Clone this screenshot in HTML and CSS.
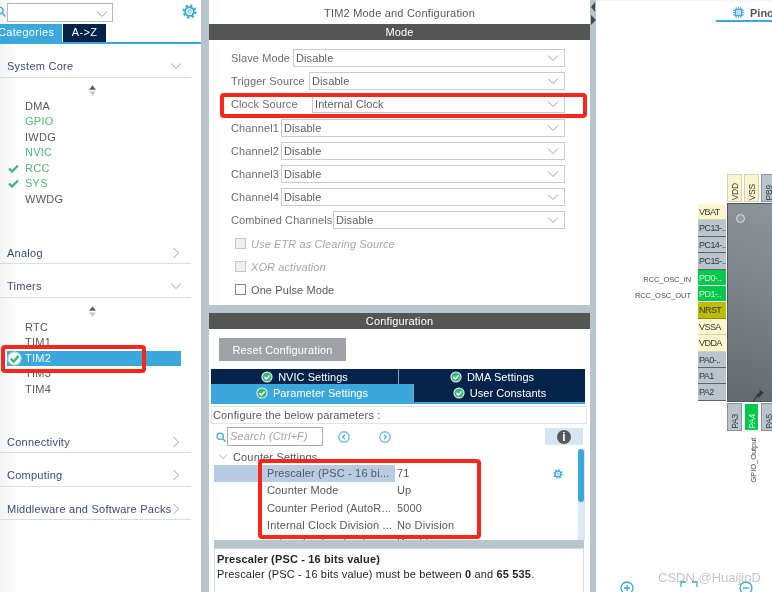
FILE: index.html
```html
<!DOCTYPE html>
<html lang="en">
<head>
<meta charset="utf-8">
<title>TIM2 Mode and Configuration</title>
<link rel="stylesheet" href="styles.css">
</head>
<body>
<svg class="sprite" aria-hidden="true">
  <symbol id="down" viewBox="0 0 12 8"><path d="M1 1.5 6 6.5 11 1.5" fill="none" stroke="#9a9fa4" stroke-width="1"/></symbol>
  <symbol id="right" viewBox="0 0 8 12"><path d="M1.5 1 6.5 6 1.5 11" fill="none" stroke="#9a9fa4" stroke-width="1"/></symbol>
  <symbol id="sort" viewBox="0 0 8 12"><path d="M4 0 8 5H0Z" fill="#5d6266"/><path d="M4 12 8 7H0Z" fill="#c4c8cc"/></symbol>
  <symbol id="tick" viewBox="0 0 14 12"><path d="M1 6 5 10 13 2" fill="none" stroke="#3cb371" stroke-width="3"/></symbol>
  <symbol id="okc" viewBox="0 0 12 12"><circle cx="6" cy="6" r="5.6" fill="#e8f5ee"/><circle cx="6" cy="6" r="4.6" fill="#3fb67c"/><path d="M3.4 6.1 5.3 8 8.7 4.4" fill="none" stroke="#fff" stroke-width="1.5"/></symbol>
  <symbol id="okw" viewBox="0 0 15 15"><circle cx="7.5" cy="7.5" r="7" fill="#f2f8f5"/><circle cx="7.5" cy="7.5" r="6.4" fill="none" stroke="#a8dcc0"/><path d="M3.8 7.8 6.6 10.6 11.4 5" fill="none" stroke="#3cb371" stroke-width="2.2"/></symbol>
  <symbol id="gear" viewBox="0 0 16 16"><circle cx="8" cy="8" r="4.6" fill="none" stroke="#3aa8dc" stroke-width="2"/><circle cx="8" cy="8" r="6.4" fill="none" stroke="#3aa8dc" stroke-width="2.2" stroke-dasharray="2.5 2.5"/><circle cx="8" cy="8" r="1.8" fill="none" stroke="#3aa8dc"/></symbol>
  <symbol id="lens" viewBox="0 0 12 12"><circle cx="5" cy="5" r="3.8" fill="none" stroke="#3aa8dc" stroke-width="1.5"/><path d="M8 8 11.5 11.5" stroke="#3aa8dc" stroke-width="1.6"/></symbol>
  <symbol id="prev" viewBox="0 0 12 12"><circle cx="6" cy="6" r="5.2" fill="none" stroke="#6cc0e8" stroke-width="1.4"/><path d="M7 3.8 4.800 6 7 8.200" fill="none" stroke="#3aa8dc" stroke-width="1.200"/></symbol>
  <symbol id="next" viewBox="0 0 12 12"><circle cx="6" cy="6" r="5.2" fill="none" stroke="#6cc0e8" stroke-width="1.4"/><path d="M5 3.8 7.200 6 5 8.200" fill="none" stroke="#3aa8dc" stroke-width="1.200"/></symbol>
</svg>

<main class="app">
  <aside class="side">
    <div class="side-top">
      <svg class="side-lens"><use href="#lens"/></svg>
      <div class="combo"><svg class="chev"><use href="#down"/></svg></div>
      <svg class="side-gear"><use href="#gear"/></svg>
    </div>
    <div class="side-tabs">
      <div class="stab stab-on">Categories</div>
      <div class="stab stab-off">A-&gt;Z</div>
    </div>

    <div class="acc"><span>System Core</span><svg class="chev"><use href="#down"/></svg></div>
    <div class="acc-body core">
      <svg class="sort"><use href="#sort"/></svg>
      <div class="it">DMA</div>
      <div class="it green">GPIO</div>
      <div class="it">IWDG</div>
      <div class="it green">NVIC</div>
      <div class="it green"><svg class="tick"><use href="#tick"/></svg>RCC</div>
      <div class="it green"><svg class="tick"><use href="#tick"/></svg>SYS</div>
      <div class="it">WWDG</div>
    </div>
    <div class="acc"><span>Analog</span><svg class="chev-r"><use href="#right"/></svg></div>
    <div class="acc"><span>Timers</span><svg class="chev"><use href="#down"/></svg></div>
    <div class="acc-body timers">
      <svg class="sort"><use href="#sort"/></svg>
      <div class="it">RTC</div>
      <div class="it">TIM1</div>
      <div class="it sel"><svg class="okw"><use href="#okw"/></svg>TIM2</div>
      <div class="it">TIM3</div>
      <div class="it">TIM4</div>
    </div>
    <div class="acc"><span>Connectivity</span><svg class="chev-r"><use href="#right"/></svg></div>
    <div class="acc"><span>Computing</span><svg class="chev-r"><use href="#right"/></svg></div>
    <div class="acc"><span>Middleware and Software Packs</span><svg class="chev-r"><use href="#right"/></svg></div>
  </aside>

  <section class="center">
    <div class="mode-panel">
      <h1 class="title">TIM2 Mode and Configuration</h1>
      <div class="bar">Mode</div>
      <div class="form">
        <div class="row"><label class="w-slave">Slave Mode</label><div class="select">Disable<svg class="chev"><use href="#down"/></svg></div></div>
        <div class="row"><label class="w-trigger">Trigger Source</label><div class="select">Disable<svg class="chev"><use href="#down"/></svg></div></div>
        <div class="row"><label class="w-clock">Clock Source</label><div class="select">Internal Clock<svg class="chev"><use href="#down"/></svg></div></div>
        <div class="row"><label class="w-chan">Channel1</label><div class="select">Disable<svg class="chev"><use href="#down"/></svg></div></div>
        <div class="row"><label class="w-chan">Channel2</label><div class="select">Disable<svg class="chev"><use href="#down"/></svg></div></div>
        <div class="row"><label class="w-chan">Channel3</label><div class="select">Disable<svg class="chev"><use href="#down"/></svg></div></div>
        <div class="row"><label class="w-chan">Channel4</label><div class="select">Disable<svg class="chev"><use href="#down"/></svg></div></div>
        <div class="row"><label class="w-comb">Combined Channels</label><div class="select">Disable<svg class="chev"><use href="#down"/></svg></div></div>
        <div class="row check dim"><span class="box"></span><em>Use ETR as Clearing Source</em></div>
        <div class="row check dim"><span class="box"></span><em>XOR activation</em></div>
        <div class="row check"><span class="box"></span><span>One Pulse Mode</span></div>
      </div>
    </div>

    <div class="config-panel">
      <div class="bar">Configuration</div>
      <button class="reset" type="button">Reset Configuration</button>
      <div class="tabs tabs-a">
        <div class="tab"><svg class="okc"><use href="#okc"/></svg>NVIC Settings</div>
        <div class="tab"><svg class="okc"><use href="#okc"/></svg>DMA Settings</div>
      </div>
      <div class="tabs tabs-b">
        <div class="tab tab-on"><svg class="okc"><use href="#okc"/></svg>Parameter Settings</div>
        <div class="tab"><svg class="okc"><use href="#okc"/></svg>User Constants</div>
      </div>
      <div class="hint">Configure the below parameters :</div>
      <div class="tools">
        <svg class="t-lens"><use href="#lens"/></svg>
        <div class="search">Search (Ctrl+F)</div>
        <svg class="nav"><use href="#prev"/></svg>
        <svg class="nav"><use href="#next"/></svg>
        <span class="info"><b>i</b></span>
      </div>
      <div class="params">
        <div class="plist">
          <div class="group"><svg class="chev"><use href="#down"/></svg>Counter Settings</div>
          <div class="p p-sel"><span>Prescaler (PSC - 16 bi...</span><span>71</span><svg class="p-gear"><use href="#gear"/></svg></div>
          <div class="p"><span>Counter Mode</span><span>Up</span></div>
          <div class="p"><span>Counter Period (AutoR...</span><span>5000</span></div>
          <div class="p"><span>Internal Clock Division ...</span><span>No Division</span></div>
          <div class="p"><span>auto-reload preload</span><span>Disable</span></div>
        </div>
        <div class="scroll"><div class="thumb"></div></div>
      </div>
      <div class="desc">
        <strong>Prescaler (PSC - 16 bits value)</strong>
        <p>Prescaler (PSC - 16 bits value) must be between <b>0</b> and <b>65 535</b>.</p>
      </div>
    </div>
  </section>

  <div class="split"><i class="tri-l"></i><i class="tri-r"></i></div>

  <section class="pinout">
    <div class="ptab">
      <svg class="chip-ico" viewBox="0 0 12 12"><rect x="2.500" y="2.500" width="7" height="7" fill="#bfe3f5" stroke="#3aa8dc" stroke-width="1.400"/><path d="M0 3.500h2M0 6h2M0 8.500h2M10 3.500h2M10 6h2M10 8.500h2M3.500 0v2M6 0v2M8.500 0v2M3.500 10v2M6 10v2M8.500 10v2" stroke="#3aa8dc" stroke-width="1"/></svg>
      <span>Pinout view</span>
    </div>

    <div class="pins-top">
      <div class="pin-v cream"><span>VDD</span></div>
      <div class="pin-v cream"><span>VSS</span></div>
      <div class="pin-v"><span>PB9</span></div>
    </div>
    <div class="pins-left">
      <div class="pin cream">VBAT</div>
      <div class="pin">PC13-..</div>
      <div class="pin">PC14-..</div>
      <div class="pin">PC15-..</div>
      <div class="pin lit">PD0-..</div>
      <div class="pin lit">PD1-..</div>
      <div class="pin olive">NRST</div>
      <div class="pin cream">VSSA</div>
      <div class="pin cream">VDDA</div>
      <div class="pin">PA0-..</div>
      <div class="pin">PA1</div>
      <div class="pin">PA2</div>
    </div>
    <div class="chip"><i class="dot"></i>
      <svg class="pushpin" viewBox="0 0 12 14"><path d="M7 0 12 4 10 5 7 9 4 6 8 3Z" fill="#33383c"/><path d="M5 7 1 13" stroke="#33383c" stroke-width="1.300"/></svg>
    </div>
    <div class="pins-bottom">
      <div class="pin-v"><span>PA3</span></div>
      <div class="pin-v lit"><span>PA4</span></div>
      <div class="pin-v"><span>PA5</span></div>
    </div>
    <div class="sig sig-in">RCC_OSC_IN</div>
    <div class="sig sig-out">RCC_OSC_OUT</div>
    <div class="sig sig-gpio">GPIO_Output</div>

    <svg class="zoom z-plus" viewBox="0 0 14 14"><circle cx="7" cy="7" r="6" fill="none" stroke="#3aa8dc" stroke-width="1.300"/><path d="M4 7h6M7 4v6" stroke="#3aa8dc" stroke-width="1.300"/></svg>
    <svg class="zoom z-fit" viewBox="0 0 18 14"><path d="M1 6V1h5M12 1h5v5" fill="none" stroke="#3aa8dc" stroke-width="1.300"/></svg>
    <svg class="zoom z-minus" viewBox="0 0 14 14"><circle cx="7" cy="7" r="6" fill="none" stroke="#3aa8dc" stroke-width="1.300"/><path d="M4 7h6" stroke="#3aa8dc" stroke-width="1.300"/></svg>
    <div class="mark">CSDN @HuaijinD</div>
  </section>

  <div class="red red-tim"></div>
  <div class="red red-clock"></div>
  <div class="red red-params"></div>
</main>
</body>
</html>
```

FILE: styles.css
```css
* { box-sizing: border-box; }
html, body { margin: 0; padding: 0; background: #fff; }
body { font-family: "Liberation Sans", Arial, sans-serif; font-size: 11px; color: #55595e; }
svg { display: block; }
.sprite { position: absolute; width: 0; height: 0; }

.app {
  position: relative;
  display: flex;
  width: 772px;
  height: 592px;
  overflow: hidden;
  filter: blur(.35px);
}

/* left tree */
.side {
  flex: none;
  width: 201px;
  height: 592px;
  padding-right: 10px;
  background: linear-gradient(90deg, #f1f2f3 0, #fff 18px);
  letter-spacing: .25px;
}
.side-top { position: relative; display: flex; align-items: center; height: 24px; padding: 2px 0 2px 7px; }
.side-lens { position: absolute; left: -5px; top: 6px; width: 11px; height: 11px; }
.combo { position: relative; width: 106px; height: 19px; background: #fff; border: 1px solid #b4b8bc; }
.combo .chev { position: absolute; right: 4px; top: 6px; }
.side-gear { position: absolute; left: 182px; top: 4px; width: 15px; height: 15px; }
.side-tabs { display: flex; width: 201px; height: 20px; border-bottom: 2px solid #3aa8dc; }
.stab { height: 18px; line-height: 17px; font-size: 11px; letter-spacing: .3px; color: #fff; text-align: center; }
.stab-on { width: 62px; background: #3aa8dc; text-align: left; text-indent: -2px; white-space: nowrap; overflow: hidden; }
.stab-off { width: 43px; margin-left: 1px; background: #03234b; }
.chev { flex: none; width: 12px; height: 8px; }
.chev-r { flex: none; width: 8px; height: 12px; margin-right: 2px; }
.acc {
  display: flex;
  align-items: center;
  justify-content: space-between;
  height: 33.5px;
  padding: 12px 9px 0 7px;
  border-bottom: 1.500px solid #d8dde4;
  font-size: 11px;
  color: #3c4a78;
  white-space: nowrap;
}
.acc-body { position: relative; padding: 7px 0 0 25px; }
.core { height: 153px; }
.timers { height: 122px; padding-top: 8px; }
.sort { width: 7px; height: 11px; margin: 0 0 3px 64px; }
.it { position: relative; height: 15.5px; line-height: 15.500px; font-size: 11px; color: #55595e; }
.green { color: #4cbb70; }
.tick { position: absolute; left: -17px; top: 3px; width: 11px; height: 9px; }
.sel {
  margin-left: -18px;
  padding-left: 18px;
  width: 174px;
  background: #3aa8dc;
  color: #fff;
}
.okc { flex: none; width: 12px; height: 12px; }
.okw { position: absolute; left: 0; top: 0; width: 15px; height: 15px; }

/* centre */
.center {
  flex: none;
  display: flex;
  flex-direction: column;
  gap: 8px;
  width: 389px;
  height: 592px;
  padding-left: 8px;
  background: #b9c5cc;
  letter-spacing: .15px;
}
.mode-panel { height: 305px; background: #fff; }
.title { margin: 0; height: 24px; font-size: 11px; font-weight: 400; letter-spacing: .2px; line-height: 26px; text-align: center; color: #55595e; }
.bar { height: 16px; background: #545654; color: #fff; font-size: 11px; line-height: 16px; text-align: center; }
.form { padding: 6.500px 25px 0 22px; letter-spacing: .1px; }
.row { display: flex; align-items: center; height: 23.2px; white-space: nowrap; }
.row label { flex: none; color: #6b6f73; }
.w-slave { width: 62px; }
.w-trigger { width: 78px; }
.w-clock { width: 81px; }
.w-chan { width: 50px; }
.w-comb { width: 102px; }
.select {
  flex: 1;
  display: flex;
  align-items: center;
  justify-content: space-between;
  height: 18px;
  padding: 0 5px 0 2px;
  border: 1px solid #c8ccd0;
  background: #fff;
  color: #5a5e62;
}
.check { padding-left: 4px; gap: 5px; color: #55595e; }
.check em { font-style: italic; }
.dim { color: #a4a8ac; }
.box { width: 11px; height: 11px; border: 1px solid #85898d; background: #fff; }
.dim .box { border-color: #c4c6c8; background: #f0f0f0; }

.config-panel { flex: 1; min-height: 0; overflow: hidden; background: #fff; }
.reset {
  display: block;
  width: 127px;
  height: 23px;
  margin: 9px 0 8px 10px;
  padding: 0;
  border: 0;
  background: #9fa3a7;
  color: #fff;
  font: inherit;
  letter-spacing: .15px;
}
.tabs { display: grid; width: 374px; margin-left: 2px; height: 15px; letter-spacing: .05px; }
.tabs-a { grid-template-columns: 187px 187px; }
.tabs-b { grid-template-columns: 202px 172px; height: 20px; border-bottom: 2px solid #3aa8dc; }
.tab {
  display: flex;
  align-items: center;
  justify-content: center;
  gap: 5px;
  background: #03234b;
  color: #fff;
  border-left: 1px solid #8fa0b4;
  white-space: nowrap;
}
.tab:first-child { border-left: 0; }
.tab-on { background: #3aa8dc; }
.hint {
  height: 18px;
  margin: 2px 3px 0 2px;
  padding-left: 1px;
  border: 1px solid #dfe3e6;
  line-height: 16px;
  color: #55595e;
}
.tools { display: flex; align-items: center; height: 19px; margin: 3px 5px 0 7px; }
.t-lens { width: 10px; height: 10px; }
.search { width: 96px; height: 19px; margin-left: 1px; padding-left: 2px; border: 1px solid #a8acb0; font-style: italic; line-height: 17px; color: #a4a8ac; }
.nav { flex: none; width: 12px; height: 12px; margin-left: 15px; }
.nav + .nav { margin-left: 29px; }
.info {
  display: flex;
  align-items: center;
  justify-content: center;
  width: 38px;
  height: 17px;
  margin-left: auto;
  margin-right: 2px;
  background: #d4e6f4;
}
.info b { width: 14px; height: 14px; border-radius: 50%; background: #55595e; color: #fff; font-size: 12px; line-height: 14px; text-align: center; letter-spacing: 0; }
.params { position: relative; height: 91px; margin: 3px 5px 0 5px; }
.plist { height: 91px; overflow: hidden; }
.group { display: flex; align-items: center; gap: 5px; height: 17px; margin-top: -1px; padding-left: 4px; }
.group .chev { width: 10px; height: 7px; }
.p {
  position: relative;
  display: grid;
  grid-template-columns: 130px 120px;
  height: 17.300px;
  line-height: 17px;
  padding-left: 53px;
  white-space: nowrap;
}
.p-sel { background: linear-gradient(90deg, #b7cbe2 181px, #fff 181px); }
.p-gear { position: absolute; left: 339px; top: 4px; width: 10px; height: 10px; }
.scroll { position: absolute; right: 0; top: 0; width: 7px; height: 91px; background: #dbe9f4; }
.thumb { width: 6px; height: 53px; border-radius: 3px; background: #3aa8dc; }
.desc {
  height: 46px;
  margin: 8px 6px 0 5px;
  padding: 3px 2px;
  border: 1px solid #d4d8dc;
  color: #1e2226;
  background: #fff;
  box-shadow: 0 -8px 0 #b9c5cc;
}
.desc strong { display: block; line-height: 15px; }
.desc p { margin: 0; line-height: 15px; }

/* splitter */
.split { flex: none; position: relative; width: 6px; height: 592px; background: #b9c5cc; }
.tri-l, .tri-r { position: absolute; left: 1px; width: 0; height: 0; border-style: solid; }
.tri-l { top: 2px; border-width: 5px 4px 5px 0; border-color: transparent #44484c transparent transparent; }
.tri-r { top: 15px; border-width: 5px 0 5px 5px; border-color: transparent transparent transparent #44484c; }

/* pinout canvas */
.pinout { position: relative; flex: 1; min-width: 0; height: 592px; background: #fff; overflow: hidden; border-top: 1px solid #eef4f8; }
.ptab {
  position: absolute;
  left: 120px;
  top: 0;
  display: flex;
  align-items: center;
  gap: 6px;
  width: 110px;
  height: 21px;
  padding: 4px 0 0 17px;
  border-bottom: 2px solid #3aa8dc;
  font-weight: 700;
  font-size: 11px;
  color: #55595e;
  white-space: nowrap;
}
.chip-ico { width: 11px; height: 11px; }
.pins-top, .pins-bottom { position: absolute; left: 131px; display: flex; gap: 2px; }
.pins-top { top: 173px; }
.pins-bottom { top: 402px; }
.pin-v {
  flex: none;
  display: flex;
  align-items: flex-end;
  justify-content: center;
  width: 15px;
  height: 28px;
  padding-bottom: 1px;
  background: #b9c5cc;
  border: 1px solid #8c9498;
  font-size: 8.500px;
  letter-spacing: -.2px;
  color: #33383c;
}
.pin-v span { writing-mode: vertical-rl; transform: rotate(180deg); white-space: nowrap; }
.pins-left { position: absolute; left: 102px; top: 203px; width: 28px; }
.pin {
  height: 16.400px;
  padding-left: 1px;
  background: #b9c5cc;
  border-bottom: 1.500px solid #5f666a;
  font-size: 9px;
  letter-spacing: -.55px;
  line-height: 17px;
  color: #33383c;
  white-space: nowrap;
}
.cream { background: #fdf5cd; border-color: #d8d2b4; }
.lit { background: #00c84c; border-color: #fff; color: #d6f5e0; }
.olive { background: #bcbc00; border-color: #8a8a10; color: #33383c; }
.chip {
  position: absolute;
  left: 131px;
  top: 202px;
  width: 60px;
  height: 199px;
  border: 1px solid #50565a;
  background: linear-gradient(200deg, #8e969a 0, #7a8286 50%, #62686c 100%);
}
.dot { position: absolute; left: 8px; top: 10px; width: 9px; height: 9px; border: 1px solid #ddd; border-radius: 50%; background: #9a9ea2; }
.pushpin { position: absolute; left: 24px; top: 185px; width: 12px; height: 14px; }
.sig { position: absolute; font-size: 7.500px; letter-spacing: -.05px; color: #4a4e52; white-space: nowrap; }
.sig-in { right: 81px; top: 274px; }
.sig-out { right: 81px; top: 290px; }
.sig-gpio { left: 134px; top: 454px; width: 46px; transform: rotate(-90deg); }
.zoom { position: absolute; top: 580px; width: 14px; height: 14px; }
.z-plus { left: 24px; }
.z-fit { left: 84px; width: 18px; }
.z-minus { left: 143px; }
.mark { position: absolute; left: 62px; top: 569px; font-size: 13px; letter-spacing: 0; color: rgba(120,124,128,.45); white-space: nowrap; }

/* annotations */
.red { position: absolute; border: 4px solid #f9261c; border-radius: 4px; pointer-events: none; }
.red-tim { left: 1px; top: 345px; width: 145px; height: 28px; }
.red-clock { left: 220px; top: 93px; width: 367px; height: 25px; }
.red-params { left: 258px; top: 459px; width: 223px; height: 80px; }
```
